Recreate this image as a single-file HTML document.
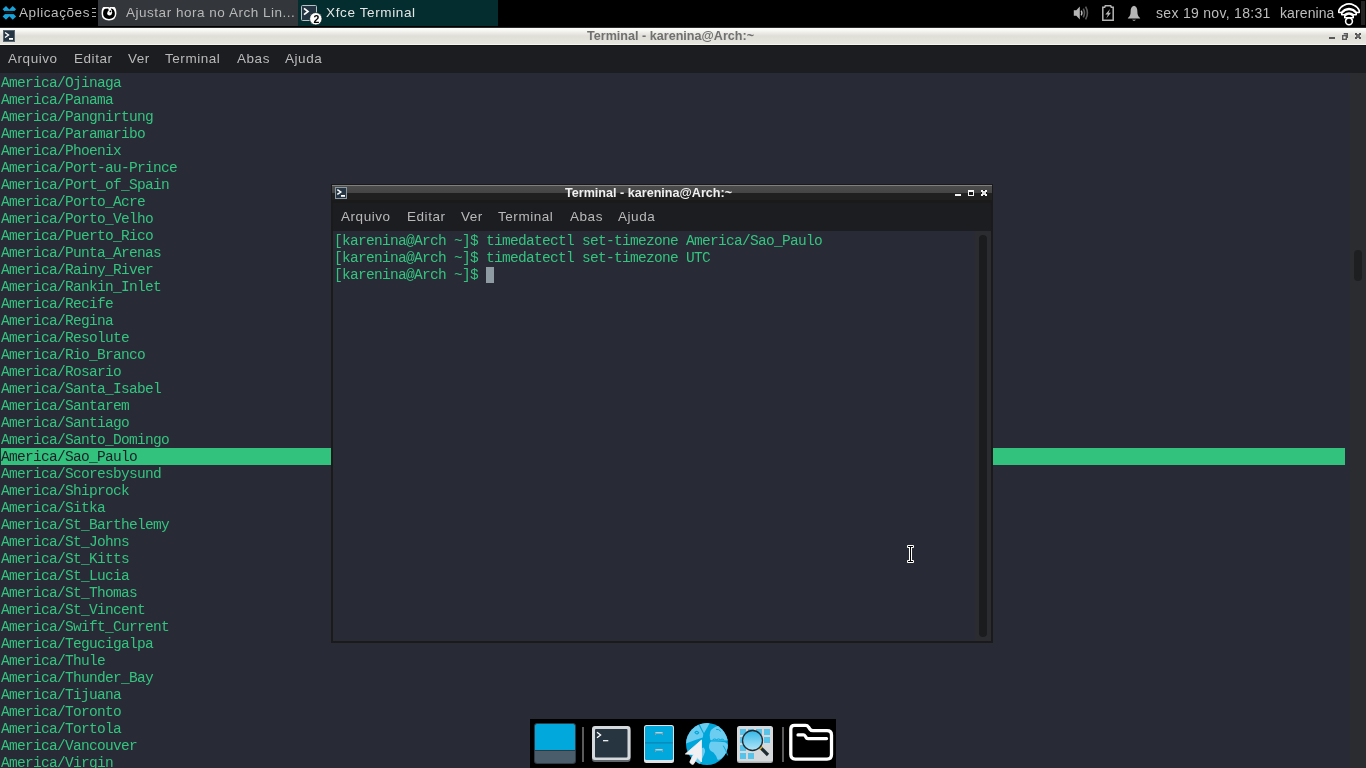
<!DOCTYPE html>
<html><head><meta charset="utf-8">
<style>
*{margin:0;padding:0;box-sizing:border-box}
html,body{width:1366px;height:768px;overflow:hidden;background:#282a36;position:relative;font-family:"Liberation Sans",sans-serif;-webkit-font-smoothing:antialiased}
#root{position:absolute;left:0;top:0;width:1366px;height:768px;will-change:transform}
.abs{position:absolute}
#panel{left:0;top:0;width:1366px;height:27px;background:#000}
.ptxt{position:absolute;top:4px;font-size:13.5px;color:#bdbdbd;white-space:nowrap;letter-spacing:0.35px;line-height:18px}
#tab1{left:98px;top:0;width:200px;height:26px;background:#33363b}
#tab2{left:298px;top:0;width:200px;height:26px;background:#032d2e}
#bgtitle{left:0;top:27px;width:1366px;height:18px;background:linear-gradient(#2a2a2a 0px,#2a2a2a 1px,#fdfdfd 1px,#f9f9f6 3px,#dfded7 9px,#e6e5dd 16px,#e6e5dd 17px,#f6f6ee 17px,#f6f6ee 18px)}
#bgtitle .t{position:absolute;left:587px;top:1px;font-weight:bold;font-size:12.6px;color:#707070;line-height:16px}
#menubar{left:0;top:45px;width:1366px;height:28px;background:linear-gradient(#141519 0px,#141519 1px,#1c1d21 1px)}
.mi{position:absolute;top:5px;font-size:13.5px;color:#bababa;letter-spacing:0.55px;line-height:18px}
#list{left:1px;top:75px;font-family:"Liberation Mono",monospace;font-size:14.5px;letter-spacing:-0.7px;line-height:17px;color:#34c47f;white-space:pre}
#hl{left:1px;top:448px;width:1344px;height:17px;background:#32c27e}
#track{left:1350px;top:73px;width:16px;height:695px;background:#2a2c30}
#thumb{left:1354px;top:250px;width:8px;height:31px;border-radius:4px;background:#1e1f21}
#win{left:331px;top:184px;width:662px;height:459px;background:#1a1a1a}
#wtitle{left:1px;top:1px;width:660px;height:18px;background:linear-gradient(#7f7f7f 0px,#7f7f7f 1px,#4c4c4c 1px,#454545 8px,#202020 8px,#202020 15px,#1a1a1a 15px,#1a1a1a 18px)}
#wtitle .t{position:absolute;left:233px;top:1px;font-weight:bold;font-size:12.6px;color:#f0f0f0;line-height:14px}
#wmenu{left:2px;top:19px;width:658px;height:28px;background:#1c1d21}
#wcontent{left:2px;top:47px;width:658px;height:410px;background:#282a36}
#wtrack{left:644px;top:47px;width:16px;height:410px;background:#2a2c30}
#wthumb{left:648px;top:4px;width:8px;height:402px;border-radius:4px;background:#1e1f21}
#wtext{left:1px;top:2px;font-family:"Liberation Mono",monospace;font-size:14.5px;letter-spacing:-0.7px;line-height:17px;color:#34c47f;white-space:pre}
#dock{left:530px;top:719px;width:306px;height:49px;background:#000}
</style></head><body><div id="root">
<!-- top panel -->
<div id="panel" class="abs">
  <svg class="abs" style="left:2px;top:5px" width="15" height="16" viewBox="0 0 15 16">
    <path d="M2.3 2.6 L12.4 13.2 M12.4 2.6 L2.3 13.2" stroke="#17a3d9" stroke-width="4.7"/>
    <rect x="2.8" y="5.9" width="9.5" height="3.2" fill="#050505"/>
    <path d="M3.5 7.3 H11" stroke="#1a2a33" stroke-width="0.8"/>
  </svg>
  <div class="ptxt" style="left:19px;letter-spacing:0.57px">Aplicações</div>
  <svg class="abs" style="left:92px;top:8px" width="4" height="9"><rect x="0" y="0" width="4" height="1" fill="#aaa"/><rect x="0" y="4" width="4" height="1" fill="#aaa"/><rect x="0" y="8" width="4" height="1" fill="#aaa"/></svg>
  <div id="tab1" class="abs">
    <svg class="abs" style="left:3px;top:6px" width="16" height="15" viewBox="0 0 16 15">
      <path d="M0.6 6.5 Q0.6 2 2.5 1 L7.6 1 L8.3 1.8 L9 1 L13.5 1 Q15.4 2.5 15.4 7.5 Q15.2 14.3 8 14.4 Q0.8 14.3 0.6 8 Z" fill="#fff"/>
      <path d="M2.1 7 Q2.3 3.3 4.3 2.7 L7.2 2.6 L7.8 4.3 Q6.2 5.5 6.1 7.8 Q6.6 9.7 8.6 9.6 Q10.8 9.4 11.2 6.8 Q11.2 4.2 9.7 2.7 L10.8 2.5 Q13.9 3.8 13.9 8 Q13.7 12.8 8 12.9 Q2.3 12.8 2.1 8 Z" fill="#000"/>
      <circle cx="9.4" cy="5.4" r="0.9" fill="#000"/>
    </svg>
    <div class="ptxt" style="left:28px;color:#b8b8b8;letter-spacing:0.52px">Ajustar hora no Arch Lin...</div>
  </div>
  <div id="tab2" class="abs">
    <svg class="abs" style="left:3px;top:5px" width="24" height="21" viewBox="0 0 24 21">
      <rect x="0.5" y="0.5" width="15" height="15" rx="1" fill="#263544" stroke="#b9c0c6" stroke-width="1"/>
      <path d="M3 3.3 L7 6.5 L3 9.7" fill="none" stroke="#fff" stroke-width="1.7"/>
      <circle cx="14.8" cy="13.75" r="6.2" fill="#fff" stroke="#021a1b" stroke-width="0.7"/>
      <text x="15.3" y="18.2" font-size="10.5" font-weight="bold" text-anchor="middle" fill="#000" font-family="Liberation Sans">2</text>
    </svg>
    <div class="ptxt" style="left:28px;color:#e6e6e6;letter-spacing:0.63px">Xfce Terminal</div>
  </div>
  <!-- speaker -->
  <svg class="abs" style="left:1073px;top:6px" width="17" height="14" viewBox="0 0 17 14">
    <path d="M0.8 4.3 H3.3 L6.8 0.4 V13.6 L3.3 9.7 H0.8 Z" fill="#b5b5b5"/>
    <path d="M8.3 4.6 Q9.6 7 8.3 9.4" fill="none" stroke="#bdbdbd" stroke-width="1.5"/>
    <path d="M10.3 2.6 Q12.6 7 10.3 11.4" fill="none" stroke="#5c5c5c" stroke-width="1.6"/>
    <path d="M12.6 0.7 Q16.2 7 12.6 13.3" fill="none" stroke="#5c5c5c" stroke-width="1.6"/>
  </svg>
  <!-- battery -->
  <svg class="abs" style="left:1102px;top:5px" width="12" height="16" viewBox="0 0 12 16">
    <path d="M3.3 0.8 H8.7 L9.3 2.3 H11.2 V15.2 H0.8 V2.3 H2.7 Z" fill="none" stroke="#b5b5b5" stroke-width="1.5"/>
    <path d="M8 4 L3.3 9.6 H5.9 L4.3 13.5 L9 7.7 H6.6 Z" fill="#b5b5b5"/>
  </svg>
  <!-- bell -->
  <svg class="abs" style="left:1127px;top:5px" width="14" height="17" viewBox="0 0 14 17">
    <path d="M7 0.8 C4.5 1.2 3.6 3.5 3.6 6.8 C3.6 10 3 11.2 0.9 12.9 V13.6 H13.1 V12.9 C11 11.2 10.4 10 10.4 6.8 C10.4 3.5 9.5 1.2 7 0.8 Z" fill="#b5b5b5"/>
    <path d="M5 14.7 H9 L7 16 Z" fill="#b5b5b5"/>
  </svg>
  <div class="ptxt" style="left:1156px;font-size:14px;letter-spacing:0.3px">sex 19 nov, 18:31</div>
  <div class="ptxt" style="left:1280px;font-size:14px;letter-spacing:0.1px">karenina</div>
  <!-- wifi -->
  <svg class="abs" style="left:1337px;top:2px" width="24" height="24" viewBox="0 0 24 24">
    <g fill="#000" stroke="#fff" stroke-width="1.6" stroke-linejoin="round">
    <path d="M1.8 8.5 Q3 5 7 3.2 Q12 0.6 17 3.2 Q21 5 22.2 8.5 V10.5 H19.5 Q17 7 12 6.5 Q7 7 4.5 10.5 H1.8 Z"/>
    <path d="M4.8 11 Q8 7.5 12 7.5 Q16 7.5 19.2 11 V12.8 H16.8 Q14.5 11 12 11 Q9.5 11 7.2 12.8 H4.8 Z"/>
    <path d="M7.8 13.8 Q10 12 12 12 Q14 12 16.2 13.8 V15.8 H7.8 Z"/>
    <circle cx="12" cy="19.3" r="3.4"/>
    </g>
  </svg>
  <div class="abs" style="left:1361px;top:1px;width:4px;height:24px;background:#232323"></div>
</div>

<!-- background window title -->
<div id="bgtitle" class="abs">
  <svg class="abs" style="left:3px;top:3px" width="12" height="12" viewBox="0 0 12 12">
    <rect x="0.5" y="0.5" width="11" height="11" fill="#263544" stroke="#5a6872" stroke-width="1"/>
    <path d="M2 2.5 L5.5 5 L2 7.5" fill="none" stroke="#fff" stroke-width="1.4"/>
    <rect x="6" y="8" width="4" height="1.8" fill="#fff"/>
  </svg>
  <div class="t">Terminal - karenina@Arch:~</div>
  <svg class="abs" style="left:1329px;top:6px" width="33" height="7" viewBox="0 0 33 7">
    <rect x="0" y="4" width="6" height="2" fill="#585858"/>
    <path d="M14.7 0.7 H18.3 V4.3 H17" fill="none" stroke="#5a5a5a" stroke-width="1.4"/>
    <rect x="13.7" y="2.7" width="3.6" height="3.6" fill="#f4f4ee" stroke="#5a5a5a" stroke-width="1.4"/>
    <g shape-rendering="crispEdges"><rect x="26" y="0" width="6" height="6" fill="#6c6c6c"/>
    <rect x="26" y="0" width="2" height="2" fill="#555"/><rect x="30" y="0" width="2" height="2" fill="#555"/>
    <rect x="26" y="4" width="2" height="2" fill="#555"/><rect x="30" y="4" width="2" height="2" fill="#555"/>
    <rect x="28" y="0" width="2" height="1" fill="#ecebe5"/><rect x="28" y="5" width="2" height="1" fill="#e3e2db"/>
    <rect x="26" y="2" width="1" height="2" fill="#e6e5de"/><rect x="31" y="2" width="1" height="2" fill="#e6e5de"/></g>
  </svg>
</div>

<!-- menubar -->
<div id="menubar" class="abs">
  <div class="mi" style="left:8px">Arquivo</div>
  <div class="mi" style="left:74px">Editar</div>
  <div class="mi" style="left:128px">Ver</div>
  <div class="mi" style="left:165px">Terminal</div>
  <div class="mi" style="left:237px">Abas</div>
  <div class="mi" style="left:285px">Ajuda</div>
</div>

<div id="hl" class="abs"></div>
<div id="list" class="abs">America/Ojinaga
America/Panama
America/Pangnirtung
America/Paramaribo
America/Phoenix
America/Port-au-Prince
America/Port_of_Spain
America/Porto_Acre
America/Porto_Velho
America/Puerto_Rico
America/Punta_Arenas
America/Rainy_River
America/Rankin_Inlet
America/Recife
America/Regina
America/Resolute
America/Rio_Branco
America/Rosario
America/Santa_Isabel
America/Santarem
America/Santiago
America/Santo_Domingo
<span style="color:#1e2027">America/Sao_Paulo</span>
America/Scoresbysund
America/Shiprock
America/Sitka
America/St_Barthelemy
America/St_Johns
America/St_Kitts
America/St_Lucia
America/St_Thomas
America/St_Vincent
America/Swift_Current
America/Tegucigalpa
America/Thule
America/Thunder_Bay
America/Tijuana
America/Toronto
America/Tortola
America/Vancouver
America/Virgin</div>
<div id="track" class="abs"></div>
<div id="thumb" class="abs"></div>

<!-- central window -->
<div id="win" class="abs">
  <div id="wtitle" class="abs">
    <svg class="abs" style="left:3px;top:2px" width="12" height="12" viewBox="0 0 12 12">
      <rect x="0.5" y="0.5" width="11" height="11" fill="#263544" stroke="#8a98a4" stroke-width="1"/>
      <path d="M2.3 2.6 L5.8 5 L2.3 7.4" fill="none" stroke="#fff" stroke-width="1.5"/>
      <rect x="6" y="8" width="4" height="1.8" fill="#fff"/>
    </svg>
    <div class="t">Terminal - karenina@Arch:~</div>
    <svg class="abs" style="left:621px;top:5px" width="36" height="8" viewBox="0 0 36 8" shape-rendering="crispEdges">
      <rect x="2" y="4" width="6" height="2" fill="#f4f4f4"/>
      <rect x="15" y="0" width="6" height="6" fill="#f4f4f4"/>
      <rect x="16" y="2" width="4" height="3" fill="#151515"/>
      <rect x="28" y="0" width="6" height="6" fill="#dedede"/>
      <rect x="28" y="0" width="2" height="2" fill="#f6f6f6"/><rect x="32" y="0" width="2" height="2" fill="#f6f6f6"/>
      <rect x="28" y="4" width="2" height="2" fill="#f6f6f6"/><rect x="32" y="4" width="2" height="2" fill="#f6f6f6"/>
      <rect x="30" y="0" width="2" height="1" fill="#151515"/><rect x="30" y="5" width="2" height="1" fill="#151515"/>
      <rect x="28" y="2" width="1" height="2" fill="#151515"/><rect x="33" y="2" width="1" height="2" fill="#151515"/>
    </svg>
  </div>
  <div id="wmenu" class="abs">
    <div class="mi" style="left:8px">Arquivo</div>
    <div class="mi" style="left:74px">Editar</div>
    <div class="mi" style="left:128px">Ver</div>
    <div class="mi" style="left:165px">Terminal</div>
    <div class="mi" style="left:237px">Abas</div>
    <div class="mi" style="left:285px">Ajuda</div>
  </div>
  <div id="wcontent" class="abs">
    <div id="wtext" class="abs">[karenina@Arch ~]$ timedatectl set-timezone America/Sao_Paulo
[karenina@Arch ~]$ timedatectl set-timezone UTC
[karenina@Arch ~]$ <span style="background:#8f9ba3;color:#8f9ba3"> </span></div>
    <div id="wtrack" class="abs" style="left:642px;top:0"><div class="abs" style="left:4px;top:4px;width:8px;height:402px;border-radius:4px;background:#1b1c1e"></div></div>
  </div>
</div>

<!-- I-beam cursor -->
<svg class="abs" style="left:906px;top:544px" width="9" height="20" viewBox="0 0 9 20" shape-rendering="crispEdges">
  <rect x="1" y="1" width="7" height="3" rx="1" fill="#fff" shape-rendering="auto"/>
  <rect x="3" y="3" width="3" height="14" fill="#fff"/>
  <rect x="1" y="16" width="7" height="3" rx="1" fill="#fff" shape-rendering="auto"/>
  <rect x="2" y="2" width="5" height="1" fill="#000"/>
  <rect x="4" y="3" width="1" height="14" fill="#000"/>
  <rect x="2" y="17" width="5" height="1" fill="#000"/>
</svg>

<!-- dock -->
<div id="dock" class="abs">
  <!-- desktop icon -->
  <div class="abs" style="left:4px;top:4px;width:42px;height:41px;border-radius:3.5px;overflow:hidden;background:#4a5d6a;box-shadow:inset 0 0 0 1px rgba(0,0,0,0.35)">
    <div class="abs" style="left:1px;top:1px;width:40px;height:26px;background:#00a8dc;border-radius:2.5px 2.5px 0 0"></div>
    <div class="abs" style="left:0;top:27px;width:42px;height:1px;background:#2a3a44"></div>
  </div>
  <div class="abs" style="left:52px;top:8px;width:2px;height:35px;background:#5a5a5a"></div>
  <!-- terminal -->
  <svg class="abs" style="left:62px;top:7px" width="39" height="37" viewBox="0 0 39 37">
    <rect x="0" y="2" width="38.5" height="34" rx="3" fill="#5f676d"/>
    <rect x="0" y="0" width="38.5" height="34" rx="3" fill="#d5d9dc"/>
    <rect x="3" y="3" width="32.5" height="28.5" rx="1" fill="#263540"/>
    <path d="M5 6.3 L8.6 9 L5 11.7" fill="none" stroke="#fff" stroke-width="1.3"/>
    <rect x="11" y="14.1" width="5.3" height="1.2" fill="#fff"/>
  </svg>
  <!-- cabinet -->
  <svg class="abs" style="left:114px;top:6px" width="30" height="39" viewBox="0 0 30 39">
    <rect x="0" y="0" width="30" height="38" rx="2.5" fill="#dfe2e4"/>
    <rect x="1" y="1" width="28" height="34" rx="1.5" fill="#00a8dc"/>
    <rect x="1" y="17" width="28" height="1.6" fill="#0a8cbc"/>
    <rect x="11" y="7" width="8" height="1.6" rx="0.6" fill="#c3ccd1"/>
    <rect x="11" y="7.5" width="1.1" height="2.6" fill="#8e9aa1"/><rect x="17.9" y="7.5" width="1.1" height="2.6" fill="#8e9aa1"/>
    <rect x="11" y="24" width="8" height="1.6" rx="0.6" fill="#c3ccd1"/>
    <rect x="11" y="24.5" width="1.1" height="2.6" fill="#8e9aa1"/><rect x="17.9" y="24.5" width="1.1" height="2.6" fill="#8e9aa1"/>
  </svg>
  <!-- globe -->
  <svg class="abs" style="left:155px;top:3px" width="45" height="46" viewBox="0 0 45 46">
    <defs><clipPath id="gc"><circle cx="22" cy="22" r="21"/></clipPath></defs>
    <circle cx="22" cy="22" r="21" fill="#00a6da"/>
    <g clip-path="url(#gc)" fill="#6dcdf0">
      <path d="M14.3 1.5 L25 0.5 L22 6 L19 11 Z"/>
      <path d="M0 0 L12.8 1.5 L18.3 12 L17.8 15.6 Q10 18 1 21.5 L0 21.5 Z"/>
      <path d="M12 30 Q16 26 18.5 25.5 Q20.5 27 20 30 Q19 33 17.5 36 L14 44 L9 44 Z"/>
      <path d="M25.5 9 Q28 5 34 3.5 Q41 7 44 14 L44 18.6 L25.5 18.2 Q24 13 25.5 9 Z"/>
      <path d="M26 19.6 Q33 19.2 40 20.2 Q43.5 22 43.5 26 Q42 32 37 36 Q34.5 38.5 32.5 37.5 Q31 33 28.5 30.5 Q24.5 28.8 24 25.5 Q24 21 26 19.6 Z"/>
    </g>
    <g fill="none" stroke="#00a6da" stroke-linecap="round">
      <path d="M10 10.5 Q12 8.2 13.6 10.6 Q12.4 12.6 10.8 11.6" stroke-width="1.2"/>
      <path d="M31.5 7.3 Q34 7 35.5 9" stroke-width="1"/>
      <path d="M28 17.4 Q30 16.4 31.5 17.6 Q33.5 16.3 35.5 17.6 Q37 16.5 38.5 17.5" stroke-width="1"/>
      <path d="M38.5 24 Q41 28 42.5 33" stroke-width="1"/>
    </g>
  </svg>
  <!-- mouse pointer -->
  <svg class="abs" style="left:153px;top:19px" width="22" height="29" viewBox="0 0 22 29">
    <path d="M18.5 2 V24 L14.2 19.6 L11 25.5 Q10 27 8.5 26 L7.3 25 Q6.5 24 7.2 23 L10.5 16.6 L2.3 16 Z" fill="#f0f0f2" stroke="#f0f0f2" stroke-width="0.8" stroke-linejoin="round"/>
  </svg>
  <!-- search -->
  <svg class="abs" style="left:207px;top:7px" width="37" height="37" viewBox="0 0 37 37">
    <rect x="0" y="1" width="36" height="36" rx="2.5" fill="#a9aeb1"/>
    <rect x="0" y="0" width="36" height="35.5" rx="2.5" fill="#d5d9dc"/>
    <g fill="#55c3ea">
      <rect x="3" y="3" width="6" height="6"/><rect x="11" y="3" width="6" height="6"/><rect x="19" y="3" width="6" height="6"/><rect x="27" y="3" width="6" height="6"/>
      <rect x="3" y="11" width="6" height="6"/><rect x="27" y="11" width="6" height="6"/>
      <rect x="3" y="19" width="6" height="6"/>
      <rect x="3" y="27" width="6" height="6"/><rect x="11" y="27" width="6" height="6"/>
    </g>
    <path d="M23 21 L31 29" stroke="#1f2b33" stroke-width="3.2" stroke-linecap="butt"/>
    <path d="M22.5 20.5 L24.5 22.5" stroke="#e3b324" stroke-width="3.4"/>
    <defs><linearGradient id="lg" x1="0" y1="0" x2="0" y2="1"><stop offset="0" stop-color="#33b7e8"/><stop offset="1" stop-color="#b5e6f7"/></linearGradient></defs>
    <circle cx="15.5" cy="14.5" r="10" fill="url(#lg)" stroke="#1f2b33" stroke-width="1.3"/>
  </svg>
  <div class="abs" style="left:252px;top:8px;width:2px;height:35px;background:#5a5a5a"></div>
  <!-- folder -->
  <svg class="abs" style="left:259px;top:4px" width="45" height="39" viewBox="0 0 45 39">
    <path d="M1.8 6 Q1.8 2.4 5.5 2.4 H16.5 Q18.5 2.4 19.5 4 L21 6.2 Q22 7.7 24 7.7 H38 Q42.5 7.7 42.5 12 V31.5 Q42.5 36.1 38 36.1 H6.3 Q1.8 36.1 1.8 31.5 Z" fill="none" stroke="#fff" stroke-width="3.3" stroke-linejoin="round"/>
    <path d="M9 11.9 H14.5 Q15.5 11.9 16.2 13 L16.8 14 Q17.5 15.6 19 15.6 H37.6" fill="none" stroke="#fff" stroke-width="3.2" stroke-linecap="round" stroke-linejoin="round"/>
  </svg>
</div>
</div></body></html>
